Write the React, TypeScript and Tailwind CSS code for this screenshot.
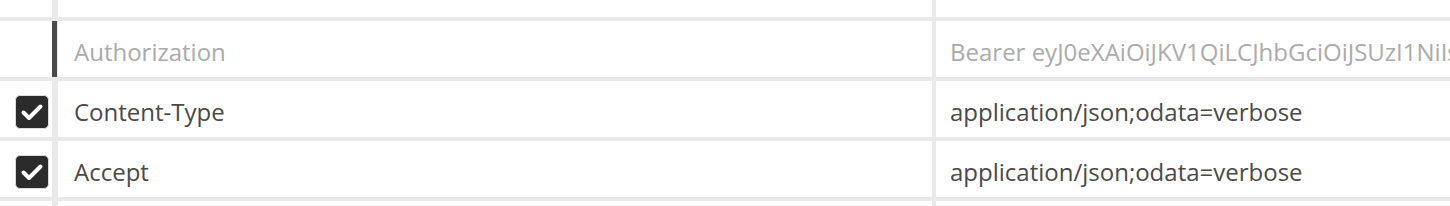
import React from "react";

const font = { fontFamily: '"Open Sans", "Noto Sans", sans-serif' };

function Check() {
  return (
    <div className="mt-[6px] w-[34px] h-[34px] rounded-[5px] border border-[#dcdcdc] bg-[#2b2b2b] flex items-center justify-center">
      <svg width="32" height="32" viewBox="0 0 32 32">
        <polyline
          points="7.5,16.5 13,22 24.5,10.5"
          fill="none"
          stroke="#ffffff"
          strokeWidth="4"
          strokeLinecap="round"
          strokeLinejoin="round"
        />
      </svg>
    </div>
  );
}

function Row({
  checked,
  active,
  keyText,
  value,
  placeholder,
  h = "h-[56px]",
}: {
  checked?: boolean;
  active?: boolean;
  keyText?: string;
  value?: string;
  placeholder?: boolean;
  h?: string;
}) {
  const color = placeholder ? "text-[#ababab]" : "text-[#4a4a4a]";
  return (
    <div className={`flex ${h}`}>
      <div className="w-[52px] flex-none bg-white flex items-center pl-[15px]">
        {checked ? <Check /> : null}
      </div>
      <div className="w-[6px] flex-none flex">
        {active ? <div className="w-[5px] h-full bg-[#4a4a4a]" /> : null}
      </div>
      <div className="w-[874px] flex-none bg-white flex items-center pl-[16px] pt-[5px]">
        <span className={`text-[24px] ${color}`}>{keyText}</span>
      </div>
      <div className="ml-[4px] flex-1 min-w-0 bg-white flex items-center pl-[14px] pt-[5px] overflow-hidden whitespace-nowrap">
        <span className={`text-[24px] ${color}`}>{value}</span>
      </div>
    </div>
  );
}

export default function App() {
  return (
    <div className="w-[1450px] h-[206px] overflow-hidden bg-[#e9e9e9]" style={font}>
      <div className="flex flex-col gap-[4px]">
        <Row h="h-[17px]" />
        <Row
          active
          placeholder
          keyText="Authorization"
          value="Bearer eyJ0eXAiOiJKV1QiLCJhbGciOiJSUzI1NiIs"
        />
        <Row checked keyText="Content-Type" value="application/json;odata=verbose" />
        <Row checked keyText="Accept" value="application/json;odata=verbose" />
        <Row h="h-[20px]" />
      </div>
    </div>
  );
}
